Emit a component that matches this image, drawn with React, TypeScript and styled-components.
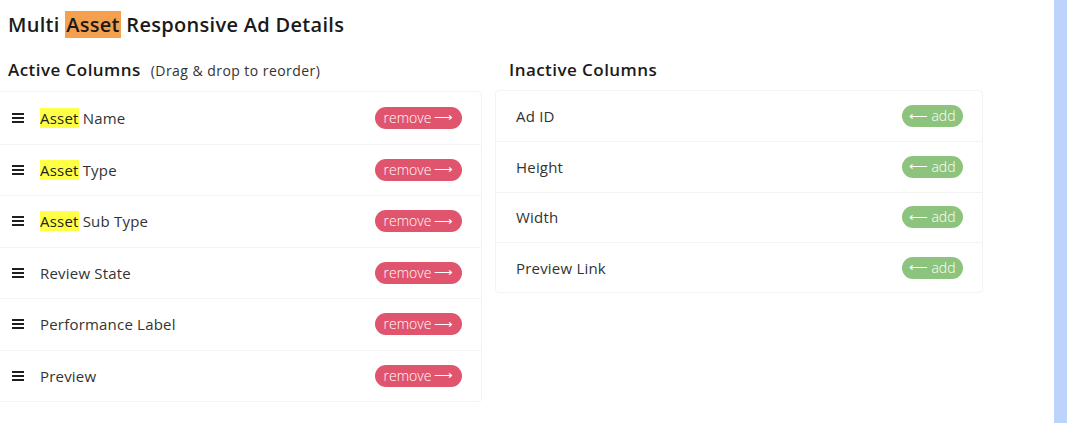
import React from "react";
import styled, { createGlobalStyle } from "styled-components";

const Global = createGlobalStyle`
  html, body { margin: 0; padding: 0; background: #fff; }
  body { font-family: "Open Sans", "Lato", sans-serif; color: #222; overflow: hidden; }
  * { box-sizing: border-box; }
`;

const Page = styled.div`
  display: flex;
  width: 1071px;
  height: 423px;
`;

const Main = styled.div`
  flex: 1;
  padding: 11px 0 0 0;
  margin-left: -6px;
`;

const Title = styled.h1`
  margin: 0 0 0 14px;
  font-size: 20px;
  font-weight: 600;
  letter-spacing: 0.3px;
  line-height: 28px;
  color: #1a1a1a;
`;

const Orange = styled.span`
  background: #f4a04f;
  padding: 0 1px;
`;

const Columns = styled.div`
  display: flex;
  gap: 13px;
  margin-top: 20px;
`;

const Column = styled.div`
  width: 488px;
  display: flex;
  flex-direction: column;
`;

const Heading = styled.h2`
  margin: 0 0 9px 14px;
  font-size: 17px;
  font-weight: 600;
  letter-spacing: 0.45px;
  line-height: 22px;
  color: #1a1a1a;
  display: flex;
  align-items: baseline;
  gap: 10px;
`;

const Hint = styled.span`
  font-size: 14px;
  font-weight: 400;
  letter-spacing: 0.45px;
  color: #333;
`;

const List = styled.div`
  border: 1px solid #f3f3f3;
  border-radius: 4px;
  background: #fff;
`;

const Row = styled.div<{ $h: number }>`
  display: flex;
  align-items: center;
  height: ${(p) => p.$h}px;
  padding: 0 19px 0 17px;
  border-top: 1px solid #f3f3f3;
  &:first-child { border-top: none; }
`;

const Handle = styled.span`
  display: inline-flex;
  flex-direction: column;
  justify-content: space-between;
  width: 12px;
  height: 10px;
  margin-right: 17px;
  & > i { display: block; height: 2px; background: #1f1f1f; }
`;

const Label = styled.span<{ $inset?: boolean }>`
  flex: 1;
  font-size: 15px;
  letter-spacing: 0.2px;
  color: #333;
  margin-left: ${(p) => (p.$inset ? "3px" : "-1px")};
`;

const Yellow = styled.span`
  background: #ffff46;
  color: #222;
`;

const Pill = styled.button<{ $kind: "remove" | "add" }>`
  display: inline-flex;
  align-items: center;
  justify-content: center;
  gap: 3px;
  border: none;
  border-radius: 11px;
  height: 22px;
  padding: 0;
  width: ${(p) => (p.$kind === "remove" ? "87px" : "61px")};
  background: ${(p) => (p.$kind === "remove" ? "#e0546d" : "#8cc47e")};
  color: #fff;
  font-family: "Open Sans", sans-serif;
  font-weight: 300;
  font-size: 14px;
  line-height: 22px;
  white-space: nowrap;
`;

const Arrow = styled.span`
  font-family: "DejaVu Sans", sans-serif;
  font-size: 13px;
  font-weight: 300;
  line-height: 1;
`;

const Side = styled.div`
  width: 13px;
  height: 423px;
  background: #bcd4fb;
  margin-right: 4px;
`;

const active = [
  { hl: "Asset", rest: " Name" },
  { hl: "Asset", rest: " Type" },
  { hl: "Asset", rest: " Sub Type" },
  { hl: "", rest: "Review State" },
  { hl: "", rest: "Performance Label" },
  { hl: "", rest: "Preview" },
];

const inactive = ["Ad ID", "Height", "Width", "Preview Link"];

export default function App() {
  return (
    <Page>
      <Global />
      <Main>
        <Title>
          Multi <Orange>Asset</Orange> Responsive Ad Details
        </Title>
        <Columns>
          <Column>
            <Heading>
              Active Columns <Hint>(Drag &amp; drop to reorder)</Hint>
            </Heading>
            <List>
              {active.map((a) => (
                <Row key={a.rest} $h={51.5}>
                  <Handle>
                    <i />
                    <i />
                    <i />
                  </Handle>
                  <Label>
                    {a.hl && <Yellow>{a.hl}</Yellow>}
                    {a.rest}
                  </Label>
                  <Pill $kind="remove">
                    remove<Arrow>⟶</Arrow>
                  </Pill>
                </Row>
              ))}
            </List>
          </Column>
          <Column>
            <Heading>Inactive Columns</Heading>
            <List>
              {inactive.map((n) => (
                <Row key={n} $h={50.3}>
                  <Label $inset>{n}</Label>
                  <Pill $kind="add">
                    <Arrow>⟵</Arrow>add
                  </Pill>
                </Row>
              ))}
            </List>
          </Column>
        </Columns>
      </Main>
      <Side />
    </Page>
  );
}
